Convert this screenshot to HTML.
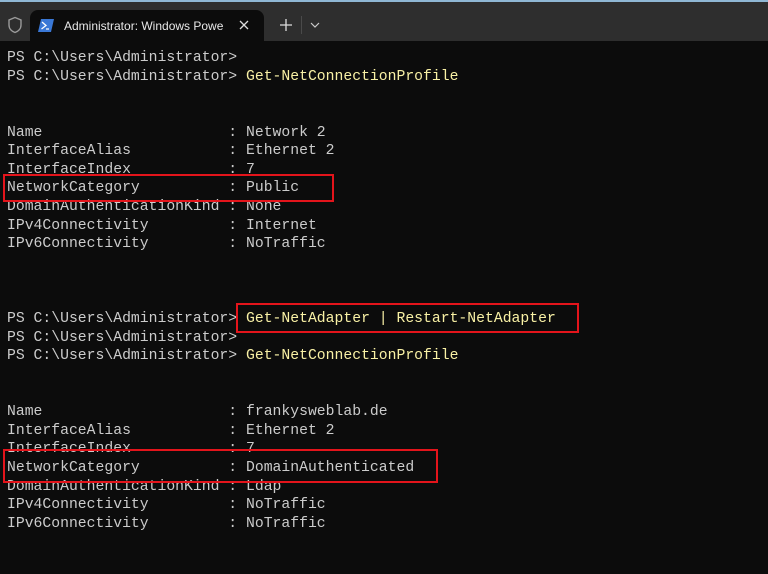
<!DOCTYPE html>
<html><head><meta charset="utf-8"><style>
html,body{margin:0;padding:0;width:768px;height:574px;overflow:hidden;background:#0c0c0c}
.bar{position:absolute;left:0;top:0;width:768px;height:41px;background:#2e2e2e;border-top:2px solid #8fb7d4;box-sizing:border-box}
.tab{position:absolute;left:30px;top:10px;width:234px;height:31px;background:#0c0c0c;border-radius:8px 8px 0 0}
.tabt{position:absolute;left:64px;top:19px;font:12px "Liberation Sans",sans-serif;color:#e8e8e8;width:160px;white-space:nowrap;overflow:hidden}
pre{position:absolute;left:7px;top:49px;margin:0;font:14.75px/18.64px "Liberation Mono",monospace;color:#cccccc}
.y{color:#f9f1a5}
.box{position:absolute;border:2.5px solid #e4141b;box-sizing:border-box}
</style></head><body>
<div class="bar"></div>
<svg style="position:absolute;left:7px;top:16px" width="16" height="18" viewBox="0 0 16 18"><path d="M8 1.5 L14 4 V9 C14 13 11 15.5 8 16.5 C5 15.5 2 13 2 9 V4 Z" fill="none" stroke="#9a9a9a" stroke-width="1.4"/></svg>
<div class="tab"></div>
<svg style="position:absolute;left:38px;top:19px" width="16" height="13" viewBox="0 0 16 13"><path d="M3 0H16L13 13H0Z" fill="#3a78d6"/><path d="M4 3L8 6.5L3.5 10" stroke="#fff" stroke-width="1.3" fill="none"/><path d="M8 10H11" stroke="#fff" stroke-width="1.2"/></svg>
<div class="tabt">Administrator: Windows Powe</div>
<svg style="position:absolute;left:239px;top:20px" width="10" height="10"><path d="M1 1L9 9M9 1L1 9" stroke="#ddd" stroke-width="1.3"/></svg>
<svg style="position:absolute;left:280px;top:19px" width="12" height="12"><path d="M6 0V12M0 6H12" stroke="#ddd" stroke-width="1.3"/></svg>
<div style="position:absolute;left:301px;top:16px;width:1px;height:18px;background:#4a4a4a"></div>
<svg style="position:absolute;left:310px;top:22px" width="10" height="6"><path d="M1 1L5 5L9 1" stroke="#ccc" stroke-width="1.2" fill="none"/></svg>
<pre>PS C:\Users\Administrator>
PS C:\Users\Administrator> <span class="y">Get-NetConnectionProfile</span>


Name                     : Network 2
InterfaceAlias           : Ethernet 2
InterfaceIndex           : 7
NetworkCategory          : Public
DomainAuthenticationKind : None
IPv4Connectivity         : Internet
IPv6Connectivity         : NoTraffic



PS C:\Users\Administrator> <span class="y">Get-NetAdapter | Restart-NetAdapter</span>
PS C:\Users\Administrator>
PS C:\Users\Administrator> <span class="y">Get-NetConnectionProfile</span>


Name                     : frankysweblab.de
InterfaceAlias           : Ethernet 2
InterfaceIndex           : 7
NetworkCategory          : DomainAuthenticated
DomainAuthenticationKind : Ldap
IPv4Connectivity         : NoTraffic
IPv6Connectivity         : NoTraffic</pre>
<div class="box" style="left:3px;top:174px;width:331px;height:28px"></div>
<div class="box" style="left:236px;top:303px;width:343px;height:30px"></div>
<div class="box" style="left:3px;top:449px;width:435px;height:34px"></div>
</body></html>
